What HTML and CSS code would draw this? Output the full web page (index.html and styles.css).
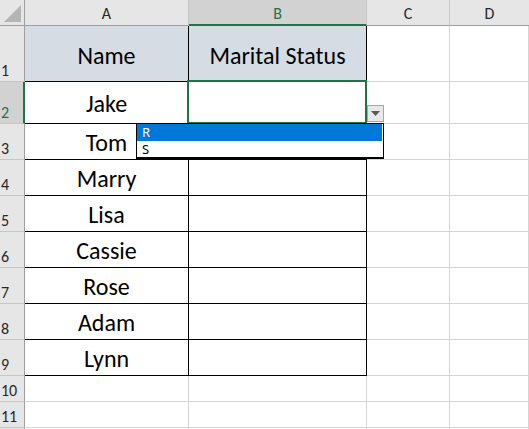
FILE: index.html
```html
<!DOCTYPE html>
<html>
<head>
<meta charset="utf-8">
<link rel="stylesheet" href="styles.css">
</head>
<body>
<div class="sheet">
  <div class="grid">
    <div class="corner"><span class="tri"></span></div>
    <div class="colhead">A</div>
    <div class="colhead sel">B</div>
    <div class="colhead">C</div>
    <div class="colhead last">D</div>

    <div class="rowhead">1</div>
    <div class="cell t hdr">Name</div>
    <div class="cell t hdr">Marital Status</div>
    <div class="cell"></div>
    <div class="cell"></div>

    <div class="rowhead sel">2</div>
    <div class="cell t">Jake</div>
    <div class="cell t"></div>
    <div class="cell"></div>
    <div class="cell"></div>

    <div class="rowhead">3</div>
    <div class="cell t">Tom</div>
    <div class="cell t"></div>
    <div class="cell"></div>
    <div class="cell"></div>

    <div class="rowhead">4</div>
    <div class="cell t">Marry</div>
    <div class="cell t"></div>
    <div class="cell"></div>
    <div class="cell"></div>

    <div class="rowhead">5</div>
    <div class="cell t">Lisa</div>
    <div class="cell t"></div>
    <div class="cell"></div>
    <div class="cell"></div>

    <div class="rowhead">6</div>
    <div class="cell t">Cassie</div>
    <div class="cell t"></div>
    <div class="cell"></div>
    <div class="cell"></div>

    <div class="rowhead">7</div>
    <div class="cell t">Rose</div>
    <div class="cell t"></div>
    <div class="cell"></div>
    <div class="cell"></div>

    <div class="rowhead">8</div>
    <div class="cell t">Adam</div>
    <div class="cell t"></div>
    <div class="cell"></div>
    <div class="cell"></div>

    <div class="rowhead">9</div>
    <div class="cell t">Lynn</div>
    <div class="cell t"></div>
    <div class="cell"></div>
    <div class="cell"></div>

    <div class="rowhead">10</div>
    <div class="cell"></div>
    <div class="cell"></div>
    <div class="cell"></div>
    <div class="cell"></div>

    <div class="rowhead">11</div>
    <div class="cell"></div>
    <div class="cell"></div>
    <div class="cell"></div>
    <div class="cell"></div>

    <div class="rowhead"></div>
    <div class="cell"></div>
    <div class="cell"></div>
    <div class="cell"></div>
    <div class="cell"></div>
  </div>

  <div class="selection"></div>
  <div class="dd-button">
    <svg width="9" height="5" viewBox="0 0 9 5"><path d="M0 0H9L4.5 5Z" fill="#5a5a5a"/></svg>
  </div>
  <div class="dd-list">
    <div class="dd-item active">R</div>
    <div class="dd-item">S</div>
  </div>
</div>
</body>
</html>
```

FILE: styles.css
```css
html, body {
  margin: 0;
  padding: 0;
  background: #ffffff;
  overflow: hidden;
}

.sheet {
  position: relative;
  width: 529px;
  height: 429px;
  overflow: hidden;
  font-family: Carlito, Lato, "Liberation Sans", sans-serif;
}

.grid {
  display: grid;
  grid-template-columns: 25px 164px 178px 83px 1fr;
  grid-template-rows: 26px 56px 42px repeat(7, 36px) 26px 26px 26px;
}

.corner {
  background: #e6e6e6;
  border-right: 1px solid #9e9e9e;
  border-bottom: 1px solid #9e9e9e;
  box-sizing: border-box;
  position: relative;
}

.tri {
  position: absolute;
  left: 4px;
  top: 5px;
  width: 0;
  height: 0;
  border-left: 17px solid transparent;
  border-bottom: 17px solid #b4b4b4;
}

.colhead {
  background: #e6e6e6;
  border-right: 1px solid #c6c6c6;
  border-bottom: 1px solid #9e9e9e;
  box-sizing: border-box;
  display: flex;
  align-items: center;
  justify-content: center;
  font-size: 16px;
  color: #262626;
  padding-top: 1px;
}

.colhead.last {
  border-right: none;
}

.colhead.sel {
  background: #d2d2d2;
  color: #217346;
  border-bottom: 2px solid #217346;
  padding-top: 2px;
}

.rowhead {
  background: #e6e6e6;
  border-right: 1px solid #9e9e9e;
  border-bottom: 1px solid #c6c6c6;
  box-sizing: border-box;
  display: flex;
  align-items: flex-end;
  justify-content: flex-start;
  padding-left: 1px;
  padding-bottom: 1px;
  font-size: 16px;
  line-height: 18px;
  color: #262626;
}

.rowhead.sel {
  background: #d2d2d2;
  color: #217346;
  border-right: 2px solid #217346;
}

.cell {
  border-right: 1px solid #d4d4d4;
  border-bottom: 1px solid #d4d4d4;
  box-sizing: border-box;
  display: flex;
  align-items: center;
  justify-content: center;
  font-size: 24px;
  color: #000000;
  padding-top: 2px;
}

.cell.t {
  border-right-color: #000000;
  border-bottom-color: #000000;
}

.cell.hdr {
  background: #d6dce4;
  padding-top: 4px;
}

.selection {
  position: absolute;
  left: 187px;
  top: 80px;
  width: 180px;
  height: 44px;
  border: 2px solid #217346;
  box-sizing: border-box;
}

.dd-button {
  position: absolute;
  left: 367px;
  top: 105px;
  width: 17px;
  height: 17px;
  box-sizing: border-box;
  background: #e8e8e8;
  border: 1px solid #a6a6a6;
  display: flex;
  align-items: center;
  justify-content: center;
}

.dd-list {
  position: absolute;
  left: 136px;
  top: 123px;
  width: 248px;
  height: 36px;
  box-sizing: border-box;
  background: #ffffff;
  border: 1px solid #000000;
  border-bottom-width: 2px;
  display: flex;
  flex-direction: column;
  font-family: "Noto Sans", "Open Sans", sans-serif;
  font-size: 13px;
}

.dd-item {
  height: 17px;
  line-height: 17px;
  padding-left: 5px;
  color: #000000;
}

.dd-item.active {
  background: #0078d7;
  color: #ffffff;
  margin-right: 1px;
}
```
